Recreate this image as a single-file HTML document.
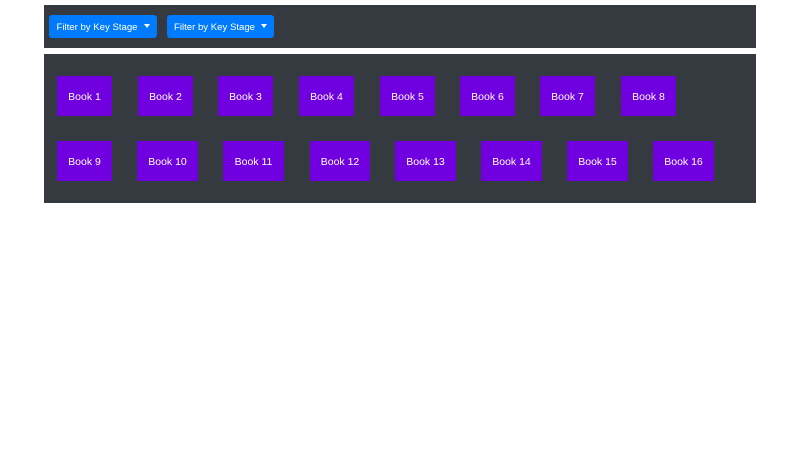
<!DOCTYPE html>
<html><head><style>
body{margin:0;width:800px;height:450px;background:#fff;position:relative;font-family:"Liberation Sans",sans-serif;overflow:hidden}
.p{position:absolute;background:#343a40;left:44px;width:712px}
.btn{position:absolute;top:15px;height:23px;background:#007bff;color:#fff;font-size:9.6px;line-height:25px;border-radius:3px;text-align:center}
.btn:after{content:"";display:inline-block;margin-left:6px;vertical-align:2px;border-top:4px solid #fff;border-left:3.5px solid transparent;border-right:3.5px solid transparent}
.b{position:absolute;background:#7000df;color:#fff;font-size:10.5px;height:40px;line-height:42px;text-align:center}
</style></head><body>
<div class="p" style="top:5px;height:43px"></div>
<div class="btn" style="left:49px;width:108px">Filter by Key Stage</div>
<div class="btn" style="left:167px;width:107px">Filter by Key Stage</div>
<div class="p" style="top:54px;height:149px"></div>
<div class="b" style="top:76px;left:57px;width:55px">Book 1</div>
<div class="b" style="top:76px;left:138px;width:55px">Book 2</div>
<div class="b" style="top:76px;left:218px;width:55px">Book 3</div>
<div class="b" style="top:76px;left:299px;width:55px">Book 4</div>
<div class="b" style="top:76px;left:380px;width:55px">Book 5</div>
<div class="b" style="top:76px;left:460px;width:55px">Book 6</div>
<div class="b" style="top:76px;left:540px;width:55px">Book 7</div>
<div class="b" style="top:76px;left:621px;width:55px">Book 8</div>
<div class="b" style="top:141px;left:57px;width:55px">Book 9</div>
<div class="b" style="top:141px;left:137px;width:61px">Book 10</div>
<div class="b" style="top:141px;left:223px;width:61px">Book 11</div>
<div class="b" style="top:141px;left:310px;width:60px">Book 12</div>
<div class="b" style="top:141px;left:395px;width:61px">Book 13</div>
<div class="b" style="top:141px;left:481px;width:61px">Book 14</div>
<div class="b" style="top:141px;left:567px;width:61px">Book 15</div>
<div class="b" style="top:141px;left:653px;width:61px">Book 16</div>
</body></html>
